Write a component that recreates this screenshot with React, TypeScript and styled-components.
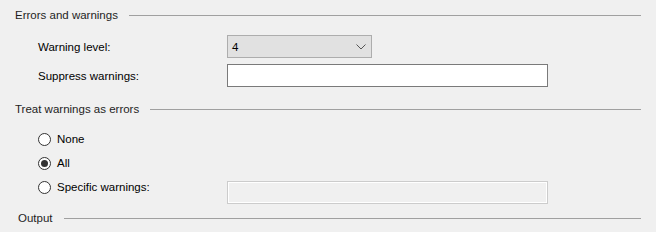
import React from "react";
import styled, { createGlobalStyle } from "styled-components";

const GlobalStyle = createGlobalStyle`
  html, body {
    margin: 0;
    padding: 0;
    background: #f0f0f0;
  }
  body {
    font-family: "Liberation Sans", Arial, sans-serif;
    font-size: 11.5px;
    color: #000;
  }
`;

const Page = styled.div`
  width: 656px;
  height: 232px;
  display: flex;
  flex-direction: column;
  padding: 6px 15px 0 15px;
  box-sizing: border-box;
  overflow: hidden;
`;

const SectionHeader = styled.div<{ $mt?: number; $indent?: number }>`
  display: flex;
  align-items: center;
  gap: 11px;
  height: 17px;
  margin-top: ${(p) => p.$mt ?? 0}px;
  padding-left: ${(p) => p.$indent ?? 0}px;
  color: #1e1e1e;

  &::after {
    content: "";
    flex: 1;
    height: 1px;
    background: #a0a0a0;
    margin-top: 1px;
  }
`;

const FieldRow = styled.div<{ $mt?: number }>`
  display: grid;
  grid-template-columns: 189px 1fr;
  align-items: center;
  padding-left: 23px;
  margin-top: ${(p) => p.$mt ?? 0}px;
`;

const Label = styled.span`
  line-height: 16px;
`;

const Combo = styled.div`
  width: 145px;
  height: 23px;
  box-sizing: border-box;
  border: 1px solid #adadad;
  background: #e1e1e1;
  display: flex;
  align-items: center;
  justify-content: space-between;
  padding: 0 5px 0 4px;
`;

const TextBox = styled.div<{ $disabled?: boolean }>`
  width: 321px;
  height: 23px;
  box-sizing: border-box;
  border: 1px solid ${(p) => (p.$disabled ? "#cccccc" : "#7a7a7a")};
  background: ${(p) => (p.$disabled ? "#f0f0f0" : "#ffffff")};
  box-shadow: ${(p) => (p.$disabled ? "inset 0 0 0 1px #ffffff" : "none")};
  margin-top: ${(p) => (p.$disabled ? "6px" : "0")};
`;

const RadioRow = styled.div<{ $mt?: number }>`
  display: grid;
  grid-template-columns: 189px 1fr;
  align-items: start;
  padding-left: 23px;
  margin-top: ${(p) => p.$mt ?? 0}px;
`;

const RadioLabel = styled.label`
  display: flex;
  align-items: center;
  gap: 6px;
  height: 24px;
`;

const RadioCircle = styled.span<{ $checked?: boolean }>`
  width: 13px;
  height: 13px;
  box-sizing: border-box;
  border-radius: 50%;
  border: 1px solid #333333;
  background: #ffffff;
  display: flex;
  align-items: center;
  justify-content: center;

  &::after {
    content: "";
    width: 7px;
    height: 7px;
    border-radius: 50%;
    background: ${(p) => (p.$checked ? "#333333" : "transparent")};
  }
`;

const Chevron = () => (
  <svg width="10" height="6" viewBox="0 0 10 6">
    <path d="M0.5 0.5 L5 5 L9.5 0.5" fill="none" stroke="#555" strokeWidth="1" />
  </svg>
);

export default function App() {
  return (
    <>
      <GlobalStyle />
      <Page>
        <SectionHeader>Errors and warnings</SectionHeader>

        <FieldRow $mt={12}>
          <Label>Warning level:</Label>
          <Combo>
            <span>4</span>
            <Chevron />
          </Combo>
        </FieldRow>

        <FieldRow $mt={6}>
          <Label>Suppress warnings:</Label>
          <TextBox />
        </FieldRow>

        <SectionHeader $mt={13}>Treat warnings as errors</SectionHeader>

        <RadioRow $mt={10}>
          <RadioLabel>
            <RadioCircle />
            None
          </RadioLabel>
        </RadioRow>

        <RadioRow>
          <RadioLabel>
            <RadioCircle $checked />
            All
          </RadioLabel>
        </RadioRow>

        <RadioRow>
          <RadioLabel>
            <RadioCircle />
            Specific warnings:
          </RadioLabel>
          <TextBox $disabled />
        </RadioRow>

        <SectionHeader $mt={5} $indent={3}>Output</SectionHeader>
      </Page>
    </>
  );
}
